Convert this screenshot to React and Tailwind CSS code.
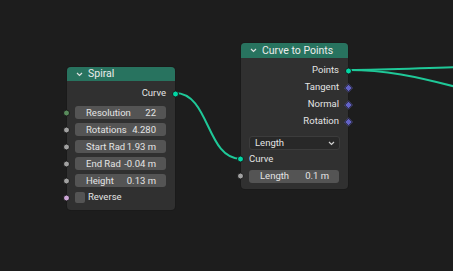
const Socket = ({ color, side = "left", shape = "circle" }) => (
  <span
    className={`absolute top-1/2 -translate-y-1/2 ${
      side === "left" ? "left-[-4px]" : "right-[-4px]"
    } w-[7px] h-[7px] border border-[#1a1a1a] ${
      shape === "diamond" ? "rotate-45 scale-90" : "rounded-full"
    }`}
    style={{ backgroundColor: color }}
  />
);

const Field = ({ label, value }) => (
  <div className="flex flex-1 min-w-0 items-center justify-between h-[13px] ml-[8px] mr-[9px] rounded-[3px] bg-[#545454] pl-[11px] pr-[10px] text-[9.5px] leading-none whitespace-nowrap text-[#e4e4e4]">
    <span>{label}</span>
    <span>{value}</span>
  </div>
);

const InputRow = ({ color, children, h = "h-[17px]" }) => (
  <div className={`relative flex items-center ${h}`}>
    <Socket color={color} />
    {children}
  </div>
);

const OutputRow = ({ label, color, shape }) => (
  <div className="relative flex items-center justify-end h-[17px] pr-[9px] text-[9.5px] whitespace-nowrap text-[#e4e4e4]">
    {label}
    <Socket color={color} side="right" shape={shape} />
  </div>
);

const Header = ({ title }) => (
  <div className="flex items-center gap-[5px] h-full pl-[9px] rounded-t-[4px] bg-[#28735f] text-[10.5px] whitespace-nowrap text-[#ececec]">
    <svg width="7" height="5" viewBox="0 0 7 5">
      <path d="M1 1 L3.5 3.5 L6 1" fill="none" stroke="#e0e0e0" strokeWidth="1.2" />
    </svg>
    <span>{title}</span>
  </div>
);

const FLOAT = "#a1a1a1";
const GEO = "#00d6a3";
const VEC = "#6363c7";

export default function App() {
  return (
    <div className="relative w-[453px] h-[271px] overflow-hidden bg-[#1d1d1d] font-['Roboto','Liberation_Sans',sans-serif]">
      <svg className="absolute inset-0" width="453" height="271">
        <g fill="none" stroke="#1fc898" strokeWidth="2">
          <path d="M175 93 C 210 93 206 159 241 159" />
          <path d="M348 70 C 390 70 420 68 460 67" />
          <path d="M348 70 C 385 70 415 76 460 88" />
        </g>
      </svg>

      {/* Spiral node */}
      <div className="absolute left-[67px] top-[67px] w-[108px] h-[143px] rounded-[4px] bg-[#303030] shadow-[0_0_0_1px_#1a1a1a]">
        <div className="h-[14px]">
          <Header title="Spiral" />
        </div>
        <div className="pt-[4px]">
          <OutputRow label="Curve" color={GEO} />
          <div className="mt-[2px]">
            <InputRow color="#598c5c">
              <Field label="Resolution" value="22" />
            </InputRow>
            <InputRow color={FLOAT}>
              <Field label="Rotations" value="4.280" />
            </InputRow>
            <InputRow color={FLOAT}>
              <Field label="Start Rad" value="1.93 m" />
            </InputRow>
            <InputRow color={FLOAT}>
              <Field label="End Rad" value="-0.04 m" />
            </InputRow>
            <InputRow color={FLOAT}>
              <Field label="Height" value="0.13 m" />
            </InputRow>
            <InputRow color="#cca6d6">
              <div className="flex items-center gap-[3px] ml-[8px] text-[9.5px] text-[#e4e4e4]">
                <span className="w-[10px] h-[11px] rounded-[2px] bg-[#545454]" />
                Reverse
              </div>
            </InputRow>
          </div>
        </div>
      </div>

      {/* Curve to Points node */}
      <div className="absolute left-[241px] top-[43px] w-[107px] h-[146px] rounded-[4px] bg-[#303030] shadow-[0_0_0_1px_#1a1a1a]">
        <div className="h-[15px]">
          <Header title="Curve to Points" />
        </div>
        <div className="pt-[4px]">
          <OutputRow label="Points" color={GEO} />
          <OutputRow label="Tangent" color={VEC} shape="diamond" />
          <OutputRow label="Normal" color={VEC} shape="diamond" />
          <OutputRow label="Rotation" color={VEC} shape="diamond" />
          <div className="mt-[5px] flex items-center h-[16px]">
            <div className="flex flex-1 min-w-0 items-center justify-between h-[14px] ml-[8px] mr-[8px] rounded-[3px] bg-[#282828] border border-[#3c3c3c] pl-[5px] pr-[4px] text-[9.5px] text-[#e4e4e4]">
              <span>Length</span>
              <svg width="7" height="5" viewBox="0 0 7 5">
                <path d="M1 1 L3.5 3.5 L6 1" fill="none" stroke="#d0d0d0" strokeWidth="1.2" />
              </svg>
            </div>
          </div>
          <InputRow color={GEO} h="h-[16px]">
            <span className="ml-[8px] text-[9.5px] text-[#e4e4e4]">Curve</span>
          </InputRow>
          <InputRow color={FLOAT} h="h-[18px]">
            <Field label="Length" value="0.1 m" />
          </InputRow>
        </div>
      </div>
    </div>
  );
}
